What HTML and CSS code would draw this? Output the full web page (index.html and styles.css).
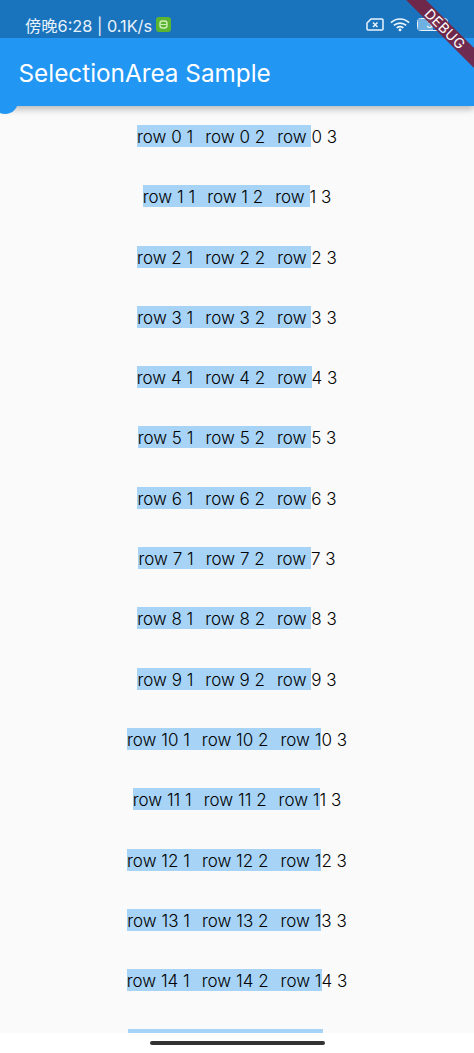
FILE: index.html
```html
<!DOCTYPE html>
<html lang="en">
<head>
<meta charset="utf-8">
<title>SelectionArea Sample</title>
<link rel="stylesheet" href="styles.css">
</head>
<body>
<div class="screen">
  <header class="top">
    <div class="status">
      <div class="status-left">
        <span>傍晚6:28 | 0.1K/s</span>
        <span class="app-badge"><svg viewBox="0 0 15 15" width="15" height="15"><rect width="15" height="15" rx="3" fill="#5cb531"/><rect x="4" y="4" width="7" height="7" rx="2.5" fill="none" stroke="#cdeeb8" stroke-width="1.4"/><path d="M4 7.500h7" stroke="#cdeeb8"/></svg></span>
      </div>
      <div class="status-right">
        <svg class="i-sim" viewBox="0 0 18 13" width="18" height="13"><path d="M5 1h11a1 1 0 0 1 1 1v9a1 1 0 0 1-1 1H2a1 1 0 0 1-1-1V5z" fill="none" stroke="#e8f2fb" stroke-width="1.5"/><path d="M7 4.500l4.500 4.500M11.500 4.500l-4.500 4.500" stroke="#e8f2fb" stroke-width="1.600"/></svg>
        <svg class="i-wifi" viewBox="0 0 22 15" width="21" height="15"><path d="M1 5.500C6.500 .5 14.500 .5 20 5.500M4 8.500c3.800-3.300 9.200-3.300 13 0M7 11c2.200-1.700 4.800-1.700 7 0" fill="none" stroke="#eef6fc" stroke-width="1.700"/><circle cx="10.500" cy="13.200" r="1.500" fill="#eef6fc"/></svg>
        <span class="battery"><span class="level"></span><span class="pct">36</span></span>
      </div>
    </div>
    <div class="appbar">SelectionArea Sample</div>
  </header>
  <main class="list">
    <div class="row"><span class="sel"><span class="cell">row 0 1</span><span class="cell">row 0 2</span>row </span>0 3</div>
    <div class="row"><span class="sel"><span class="cell">row 1 1</span><span class="cell">row 1 2</span>row </span>1 3</div>
    <div class="row"><span class="sel"><span class="cell">row 2 1</span><span class="cell">row 2 2</span>row </span>2 3</div>
    <div class="row"><span class="sel"><span class="cell">row 3 1</span><span class="cell">row 3 2</span>row </span>3 3</div>
    <div class="row"><span class="sel"><span class="cell">row 4 1</span><span class="cell">row 4 2</span>row </span>4 3</div>
    <div class="row"><span class="sel"><span class="cell">row 5 1</span><span class="cell">row 5 2</span>row </span>5 3</div>
    <div class="row"><span class="sel"><span class="cell">row 6 1</span><span class="cell">row 6 2</span>row </span>6 3</div>
    <div class="row"><span class="sel"><span class="cell">row 7 1</span><span class="cell">row 7 2</span>row </span>7 3</div>
    <div class="row"><span class="sel"><span class="cell">row 8 1</span><span class="cell">row 8 2</span>row </span>8 3</div>
    <div class="row"><span class="sel"><span class="cell">row 9 1</span><span class="cell">row 9 2</span>row </span>9 3</div>
    <div class="row"><span class="sel"><span class="cell">row 10 1</span><span class="cell">row 10 2</span>row 1</span>0 3</div>
    <div class="row"><span class="sel"><span class="cell">row 11 1</span><span class="cell">row 11 2</span>row 1</span>1 3</div>
    <div class="row"><span class="sel"><span class="cell">row 12 1</span><span class="cell">row 12 2</span>row 1</span>2 3</div>
    <div class="row"><span class="sel"><span class="cell">row 13 1</span><span class="cell">row 13 2</span>row 1</span>3 3</div>
    <div class="row"><span class="sel"><span class="cell">row 14 1</span><span class="cell">row 14 2</span>row 1</span>4 3</div>
    <div class="row"><span class="sel sel-cut"></span></div>
  </main>
  <footer class="nav"><span class="pill"></span></footer>
  <span class="handle"></span>
  <div class="ribbon">DEBUG</div>
</div>
</body>
</html>
```
FILE: styles.css
```css
* { box-sizing: border-box; }
html, body { margin: 0; padding: 0; }
body { width: 474px; height: 1053px; overflow: hidden; background: #fff; font-family: Inter, "Noto Sans CJK SC", sans-serif; }
.screen { position: relative; width: 474px; height: 1053px; overflow: hidden; display: flex; flex-direction: column; }
.top { flex: none; height: 106px; box-shadow: 0 3px 7px rgba(0,0,0,.28); position: relative; z-index: 2; }
.status { height: 38px; background: #1a74bd; color: #e8f2fb; display: flex; justify-content: space-between; align-items: center; padding: 16px 26px 5px 25px; font-size: 16.300px; }
.status-left { display: flex; align-items: center; gap: 4px; }
.app-badge { display: flex; }
.status-right { display: flex; align-items: center; gap: 6px; }
.battery { position: relative; display: block; width: 31px; height: 13px; border: 1.400px solid #e8f2fb; border-radius: 3.500px; }
.level { display: block; width: 50%; height: 100%; background: #6fb0e2; }
.pct { position: absolute; inset: 0; font-size: 10px; line-height: 11px; text-align: center; color: #fff; }
.appbar { height: 68px; background: #2196f3; color: #fff; font-size: 24.300px; line-height: 70px; padding-left: 18.500px; }
.list { flex: 1; min-height: 0; background: #fafafa; padding-top: 19px; display: flex; flex-direction: column; align-items: center; gap: 38.300px; overflow: hidden; color: #000; font-size: 17px; font-weight: 350; line-height: 20px; }
.row { flex: none; height: 22px; white-space: pre; }
.sel { display: inline-block; padding-top: 2px; background: #a6d3f6; }
.cell { margin-right: 12px; }
.sel-cut { width: 195px; height: 22px; display: block; margin-right: 24px; }
.nav { flex: none; height: 20px; background: #fff; display: flex; justify-content: center; padding-top: 8px; }
.pill { display: block; width: 175px; height: 4px; border-radius: 2px; background: #333; }
.handle { position: absolute; z-index: 3; left: -8px; top: 88px; width: 26px; height: 26px; border-radius: 50%; background: #2196f3; }
.ribbon { position: absolute; z-index: 4; top: 22px; right: -31px; width: 120px; height: 14px; line-height: 14px; transform: rotate(45deg); background: rgba(123,28,58,.88); color: #fff; font-size: 14px; letter-spacing: .4px; text-align: center; }
```
